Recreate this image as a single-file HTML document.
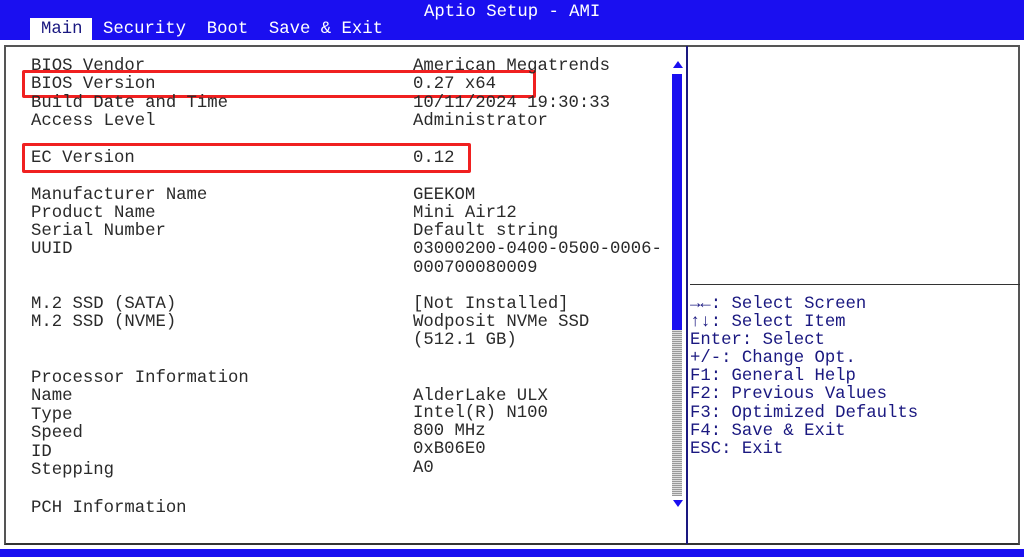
<!DOCTYPE html>
<html><head><style>
body{margin:0;width:1024px;height:557px;overflow:hidden;background:#fff;font-family:"Liberation Mono",monospace;position:relative}
.top{position:absolute;left:0;top:0;width:1024px;height:40px;background:#1a0ff0}
.t{position:absolute;white-space:pre;font-size:17.3px;line-height:18.1px;color:#2a2a2a}
.w{color:#fff}
.h{color:#1a1880}
.tab{position:absolute;left:30px;top:18px;width:62px;height:22px;background:#fff}
.bot{position:absolute;left:0;top:549px;width:1024px;height:8px;background:#1a0ff0}
.box{position:absolute;border:3px solid #f02020;border-radius:2px}
</style></head><body>
<div class="top"></div>
<div class="tab"></div>
<div class="t w" style="left:424px;top:4px">Aptio Setup - AMI</div>
<div class="t h" style="left:41px;top:21px">Main</div>
<div class="t w" style="left:103px;top:21px">Security  Boot  Save &amp; Exit</div>
<div style="position:absolute;left:4px;top:45px;width:1016px;height:500px;border:2px solid #555;border-bottom-color:#333;box-sizing:border-box"></div>
<div style="position:absolute;left:686px;top:46px;width:2px;height:498px;background:#1a1880"></div>
<div style="position:absolute;left:690px;top:284px;width:330px;height:1px;background:#333"></div>
<div style="position:absolute;left:673px;top:61px;width:0;height:0;border-left:5px solid transparent;border-right:5px solid transparent;border-bottom:7px solid #1a0ff0"></div>
<div style="position:absolute;left:672px;top:74px;width:10px;height:256px;background:#1a0ff0"></div>
<div style="position:absolute;left:672px;top:330px;width:10px;height:166px;background:repeating-linear-gradient(0deg,#999 0 1px,#ddd 1px 2px)"></div>
<div style="position:absolute;left:673px;top:500px;width:0;height:0;border-left:5px solid transparent;border-right:5px solid transparent;border-top:7px solid #1a0ff0"></div>
<div class="box" style="left:22px;top:70px;width:508px;height:22px"></div>
<div class="box" style="left:22px;top:143px;width:443px;height:24px"></div>
<div class="t" style="left:31px;top:58px">BIOS Vendor</div><div class="t" style="left:413px;top:58px">American Megatrends</div>
<div class="t" style="left:31px;top:76px">BIOS Version</div><div class="t" style="left:413px;top:76px">0.27 x64</div>
<div class="t" style="left:31px;top:95px">Build Date and Time</div><div class="t" style="left:413px;top:95px">10/11/2024 19:30:33</div>
<div class="t" style="left:31px;top:113px">Access Level</div><div class="t" style="left:413px;top:113px">Administrator</div>
<div class="t" style="left:31px;top:150px">EC Version</div><div class="t" style="left:413px;top:150px">0.12</div>
<div class="t" style="left:31px;top:187px">Manufacturer Name</div><div class="t" style="left:413px;top:187px">GEEKOM</div>
<div class="t" style="left:31px;top:205px">Product Name</div><div class="t" style="left:413px;top:205px">Mini Air12</div>
<div class="t" style="left:31px;top:223px">Serial Number</div><div class="t" style="left:413px;top:223px">Default string</div>
<div class="t" style="left:31px;top:241px">UUID</div><div class="t" style="left:413px;top:241px">03000200-0400-0500-0006-</div>
<div class="t" style="left:413px;top:260px">000700080009</div>
<div class="t" style="left:31px;top:296px">M.2 SSD (SATA)</div><div class="t" style="left:413px;top:296px">[Not Installed]</div>
<div class="t" style="left:31px;top:314px">M.2 SSD (NVME)</div><div class="t" style="left:413px;top:314px">Wodposit NVMe SSD</div>
<div class="t" style="left:413px;top:332px">(512.1 GB)</div>
<div class="t" style="left:31px;top:370px">Processor Information</div>
<div class="t" style="left:31px;top:388px">Name</div><div class="t" style="left:413px;top:388px">AlderLake ULX</div>
<div class="t" style="left:31px;top:407px">Type</div><div class="t" style="left:413px;top:405px">Intel(R) N100</div>
<div class="t" style="left:31px;top:425px">Speed</div><div class="t" style="left:413px;top:423px">800 MHz</div>
<div class="t" style="left:31px;top:444px">ID</div><div class="t" style="left:413px;top:441px">0xB06E0</div>
<div class="t" style="left:31px;top:462px">Stepping</div><div class="t" style="left:413px;top:460px">A0</div>
<div class="t" style="left:31px;top:500px">PCH Information</div>
<div class="t h" style="left:690px;top:296px">→←: Select Screen
↑↓: Select Item
Enter: Select
+/-: Change Opt.
F1: General Help
F2: Previous Values
F3: Optimized Defaults
F4: Save &amp; Exit
ESC: Exit</div>
<div class="bot"></div>
</body></html>
